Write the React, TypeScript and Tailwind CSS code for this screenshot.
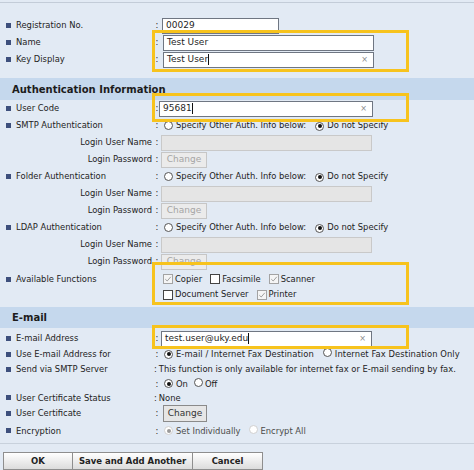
import React from 'react';

const font = "font-['DejaVu_Sans','Verdana',sans-serif]";

function Bullet() {
  return <span className="inline-block w-[5px] h-[5px] bg-[#3d4f7c] ml-[6px] mr-[5px] shrink-0" />;
}

function Colon() {
  return <span className="w-[8px] text-center shrink-0">:</span>;
}

function Row({ label, sub, h = 'h-[17px]', children }: { label?: string; sub?: boolean; h?: string; children?: React.ReactNode }) {
  return (
    <div className={`flex items-center ${h}`}>
      {sub ? (
        <div className="w-[153px] shrink-0 text-right pr-[1px]">{label}</div>
      ) : (
        <div className="w-[153px] shrink-0 flex items-center">
          {label && <Bullet />}
          <span>{label}</span>
        </div>
      )}
      <Colon />
      <div className="flex items-center min-w-0">{children}</div>
    </div>
  );
}

function TextBox({ value, width = 'w-[212px]', clear, caret }: { value: string; width?: string; clear?: boolean; caret?: boolean }) {
  return (
    <div className={`relative ${width} h-[16px] bg-white border border-[#6f7682] flex items-center pl-[3px] text-[9px] text-[#1f1f1f]`}>
      <span>{value}</span>
      {caret && <span className="inline-block w-[1px] h-[11px] bg-[#111]" />}
      {clear && <span className="absolute right-[5px] top-[1px] text-[8px] text-[#8a8a8a]">×</span>}
    </div>
  );
}

function DisabledBox() {
  return <div className="w-[211px] h-[16px] bg-[#e5e5e5] border border-[#c9c9c9]" />;
}

function ChangeButton({ disabled }: { disabled?: boolean }) {
  return disabled ? (
    <div className="w-[46px] h-[16px] bg-[#ebebeb] border border-[#c6c6c6] text-[#a5a5a5] text-[9px] flex items-center justify-center">Change</div>
  ) : (
    <div className="w-[44px] h-[17px] bg-[#e6e6e6] border border-[#8a8a8a] text-[#333] text-[9px] flex items-center justify-center">Change</div>
  );
}

function Radio({ on, faded }: { on?: boolean; faded?: boolean }) {
  return (
    <span
      className={`inline-flex items-center justify-center w-[9px] h-[9px] rounded-full border bg-white shrink-0 ${
        faded ? 'border-[#d0d0d0]' : 'border-[#555]'
      }`}
    >
      {on && <span className={`w-[4px] h-[4px] rounded-full ${faded ? 'bg-[#9a9a9a]' : 'bg-[#111]'}`} />}
    </span>
  );
}

function Check({ on }: { on?: boolean }) {
  return on ? (
    <svg width="10" height="10" viewBox="0 0 10 10" className="shrink-0">
      <rect x="0.5" y="0.5" width="9" height="9" fill="#f5f5f5" stroke="#a3a3a3" />
      <path d="M2.3 5.2 L4.2 7 L7.8 2.8" fill="none" stroke="#a0a0a0" strokeWidth="1" />
    </svg>
  ) : (
    <svg width="10" height="10" viewBox="0 0 10 10" className="shrink-0">
      <rect x="0.5" y="0.5" width="9" height="9" fill="#fff" stroke="#444" />
    </svg>
  );
}

function AuthBlock({ label }: { label: string }) {
  return (
    <>
      <Row label={label}>
        <div className="flex items-center pl-[3px]">
          <Radio />
          <span className="ml-[3px]">Specify Other Auth. Info below:</span>
          <span className="ml-[9px]"><Radio on /></span>
          <span className="ml-[3px]">Do not Specify</span>
        </div>
      </Row>
      <Row label="Login User Name " sub>
        <DisabledBox />
      </Row>
      <Row label="Login Password " sub>
        <ChangeButton disabled />
      </Row>
    </>
  );
}

function Band({ title, h }: { title: string; h: string }) {
  return (
    <div className={`${h} bg-[#c5d8ed] flex items-center pl-[12px] font-bold text-[10px] text-[#1c1c1c]`}>{title}</div>
  );
}

export default function App() {
  return (
    <div className={`relative w-[474px] h-[470px] overflow-hidden bg-[#e2eaf4] text-[8.4px] text-[#222] ${font}`}>
      {/* top rule */}
      <div className="h-[2px]" />
      <div className="h-[1px] bg-[#c3ccd8]" />
      <div className="h-[14px]" />

      <Row label="Registration No.">
        <div className="pl-[1px]"><TextBox value="00029" width="w-[117px]" /></div>
      </Row>
      <Row label="Name">
        <div className="pl-[2px]"><TextBox value="Test User" width="w-[211px]" /></div>
      </Row>
      <Row label="Key Display">
        <div className="pl-[2px]"><TextBox value="Test User" width="w-[211px]" clear caret /></div>
      </Row>

      <div className="h-[10px]" />
      <Band title="Authentication Information" h="h-[22px]" />

      <Row label="User Code">
        <div className="-ml-[2px]"><TextBox value="95681" width="w-[214px]" clear caret /></div>
      </Row>
      <AuthBlock label="SMTP Authentication" />
      <AuthBlock label="Folder Authentication" />
      <AuthBlock label="LDAP Authentication" />

      {/* Available functions */}
      <div className="flex h-[33px] pt-[1px]">
        <div className="w-[153px] shrink-0 flex items-center h-[16px]">
          <Bullet />
          <span>Available Functions</span>
        </div>
        <div className="w-[8px]" />
        <div className="flex flex-col pl-[2px]">
          <div className="flex items-center h-[16px] gap-[2px]">
            <Check on /><span className="mr-[6px]">Copier</span>
            <Check /><span className="mr-[6px]">Facsimile</span>
            <Check on /><span>Scanner</span>
          </div>
          <div className="flex items-center h-[15px] gap-[2px]">
            <Check /><span className="mr-[6px]">Document Server</span>
            <Check on /><span>Printer</span>
          </div>
        </div>
      </div>

      <div className="h-[4px]" />
      <Band title="E-mail" h="h-[21px]" />
      <div className="h-[2px]" />

      <Row label="E-mail Address">
        <TextBox value="test.user@uky.edu" width="w-[211px]" clear caret />
      </Row>
      <Row label="Use E-mail Address for" h="h-[15px]">
        <div className="flex items-center pl-[3px] tracking-[0.08px]">
          <Radio on />
          <span className="ml-[3px]">E-mail / Internet Fax Destination</span>
          <span className="ml-[9px]"><Radio /></span>
          <span className="ml-[3px]">Internet Fax Destination Only</span>
        </div>
      </Row>
      <div className="flex items-center h-[15px]">
        <div className="w-[153px] shrink-0 flex items-center">
          <Bullet />
          <span>Send via SMTP Server</span>
        </div>
        <span className="whitespace-nowrap pl-[1px]">:<span className="ml-[2px]">This function is only available for internet fax or E-mail sending by fax.</span></span>
      </div>
      <Row h="h-[14px]">
        <div className="flex items-center pl-[3px]">
          <Radio on />
          <span className="ml-[3px]">On</span>
          <span className="ml-[6px]"><Radio /></span>
          <span className="ml-[2px]">Off</span>
        </div>
      </Row>
      <div className="flex items-center h-[14px]">
        <div className="w-[153px] shrink-0 flex items-center">
          <Bullet />
          <span>User Certificate Status</span>
        </div>
        <span className="pl-[1px]">:<span className="ml-[2px]">None</span></span>
      </div>
      <Row label="User Certificate">
        <div className="pl-[2px]"><ChangeButton /></div>
      </Row>
      <Row label="Encryption" h="h-[18px]">
        <div className="flex items-center pl-[3px] text-[#4a4a4a]">
          <Radio on faded />
          <span className="ml-[3px]">Set Individually</span>
          <span className="ml-[8px]"><Radio faded /></span>
          <span className="ml-[3px]">Encrypt All</span>
        </div>
      </Row>

      <div className="h-[3px]" />
      <div className="h-[1px] bg-[#c8d1dc]" />
      <div className="h-[8px]" />

      {/* action buttons */}
      <div className="flex ml-[3px] font-bold text-[8.5px] text-[#222]">
        {[
          ['OK', 'w-[70px]'],
          ['Save and Add Another', 'w-[120px]'],
          ['Cancel', 'w-[70px]'],
        ].map(([t, w], i) => (
          <div
            key={t}
            className={`${w} h-[18px] flex items-center justify-center border border-[#8e8e8e] ${i > 0 ? 'border-l-0' : ''} bg-gradient-to-b from-white to-[#dcdcdc]`}
          >
            {t}
          </div>
        ))}
      </div>

      {/* highlight boxes */}
      <div className="absolute left-[152px] top-[30px] w-[257px] h-[42px] border-[3px] border-[#f7c31d]" />
      <div className="absolute left-[152px] top-[93px] w-[257px] h-[29px] border-[3px] border-[#f7c31d]" />
      <div className="absolute left-[152px] top-[262px] w-[257px] h-[43px] border-[3px] border-[#f7c31d]" />
      <div className="absolute left-[152px] top-[325px] w-[257px] h-[24px] border-[3px] border-[#f7c31d]" />
    </div>
  );
}
